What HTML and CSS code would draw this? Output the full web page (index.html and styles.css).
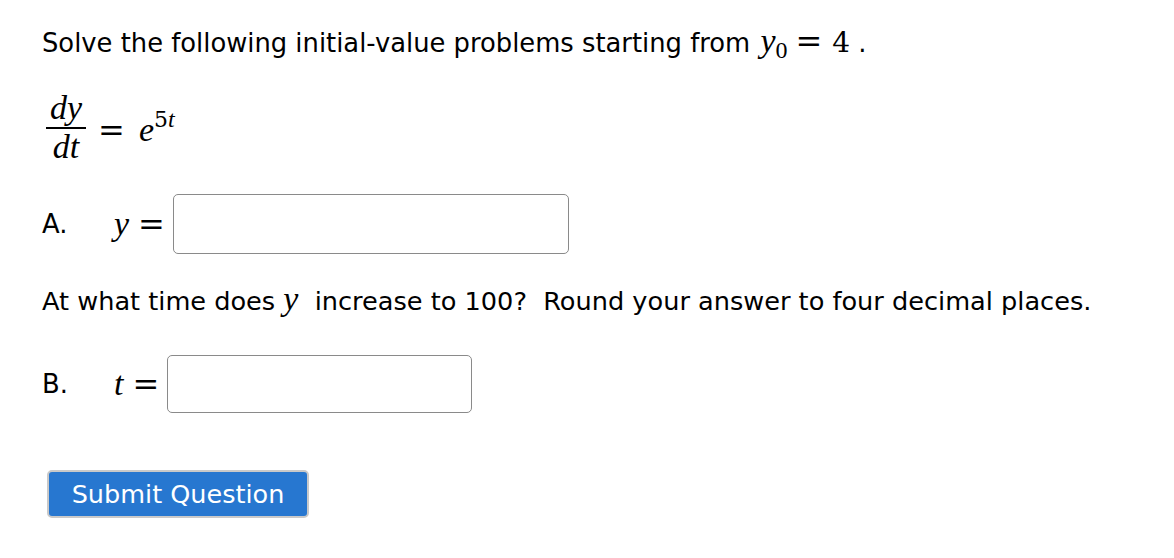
FILE: index.html
```html
<!DOCTYPE html>
<html>
<head>
<meta charset="utf-8">
<link rel="stylesheet" href="styles.css">
</head>
<body>
<div class="problem">
  <p class="intro">Solve the following initial-value problems starting from <span class="math"><i>y</i><sub>0</sub><span class="op">=</span><span class="num-d">4</span></span> .</p>
  <div class="equation">
    <span class="frac"><span class="num"><i>dy</i></span><span class="den"><i>dt</i></span></span>
    <span class="math eq-rhs"><span class="op">=</span><i>e</i><sup><span class="up">5</span><i>t</i></sup></span>
  </div>
  <div class="answer-row row-a">
    <span class="label">A.</span>
    <span class="math lhs"><i>y</i><span class="op">=</span></span>
    <span class="field field-a"></span>
  </div>
  <p class="question">At what time does <span class="math"><i>y</i></span>&nbsp; increase to 100?&nbsp; Round your answer to four decimal places.</p>
  <div class="answer-row row-b">
    <span class="label">B.</span>
    <span class="math lhs"><i>t</i><span class="op">=</span></span>
    <span class="field field-b"></span>
  </div>
  <button class="submit">Submit Question</button>
</div>
</body>
</html>
```
FILE: styles.css
```css
html, body {
  margin: 0;
  padding: 0;
  background: #ffffff;
}
body {
  font-family: "DejaVu Sans", sans-serif;
  font-size: 25.8px;
  color: #000000;
}
.problem {
  padding: 24px 0 0 42px;
}
.intro, .question {
  margin: 0;
  line-height: 34px;
  white-space: nowrap;
}
.question {
  font-size: 25.6px;
  margin-top: 28px;
}
.math {
  font-family: "Liberation Serif", "DejaVu Serif", serif;
  font-size: 34px;
}
.math i {
  font-style: italic;
}
.intro .math i {
  margin-left: 2px;
}
.math sub {
  font-size: 24px;
  font-style: normal;
  vertical-align: -6px;
  line-height: 0;
}
.op {
  font-family: "DejaVu Serif", serif;
  font-style: normal;
  font-size: 32px;
  margin: 0 10px 0 8px;
}
.num-d {
  font-family: "DejaVu Serif", serif;
  font-size: 28px;
}
.equation {
  display: flex;
  align-items: center;
  margin-top: 30px;
  height: 74px;
  padding-left: 4px;
}
.frac {
  display: inline-flex;
  flex-direction: column;
  align-items: center;
  font-family: "Liberation Serif", "DejaVu Serif", serif;
  font-size: 34px;
  line-height: 34px;
}
.frac .num {
  padding: 0 4px 2px;
  border-bottom: 2px solid #000;
}
.frac .den {
  padding-top: 1px;
}
.eq-rhs {
  margin-left: 2px;
  margin-top: 6px;
}
.eq-rhs .op {
  margin: 0 14px 0 10px;
}
.eq-rhs sup {
  font-size: 24px;
  line-height: 0;
  vertical-align: 14px;
}
.eq-rhs .up {
  font-family: "DejaVu Serif", serif;
  font-size: 22px;
  font-style: normal;
}
.answer-row {
  display: flex;
  align-items: center;
}
.row-a {
  margin-top: 30px;
}
.row-b {
  margin-top: 37px;
}
.label {
  width: 72px;
}
.lhs {
  display: inline-flex;
  align-items: center;
}
.lhs .op {
  margin: 0 8px 0 9px;
}
.field {
  display: block;
  box-sizing: border-box;
  border: 1px solid #8a8a8a;
  border-radius: 5px;
  background: #fff;
}
.field-a {
  width: 396px;
  height: 60px;
}
.field-b {
  width: 305px;
  height: 58px;
}
.submit {
  display: block;
  margin: 57px 0 0 5px;
  width: 262px;
  height: 48px;
  box-sizing: border-box;
  background: #2777d0;
  color: #ffffff;
  border: 2px solid #c9c9c9;
  border-radius: 5px;
  font-family: "DejaVu Sans", sans-serif;
  font-size: 25.5px;
  padding: 0;
}
```
